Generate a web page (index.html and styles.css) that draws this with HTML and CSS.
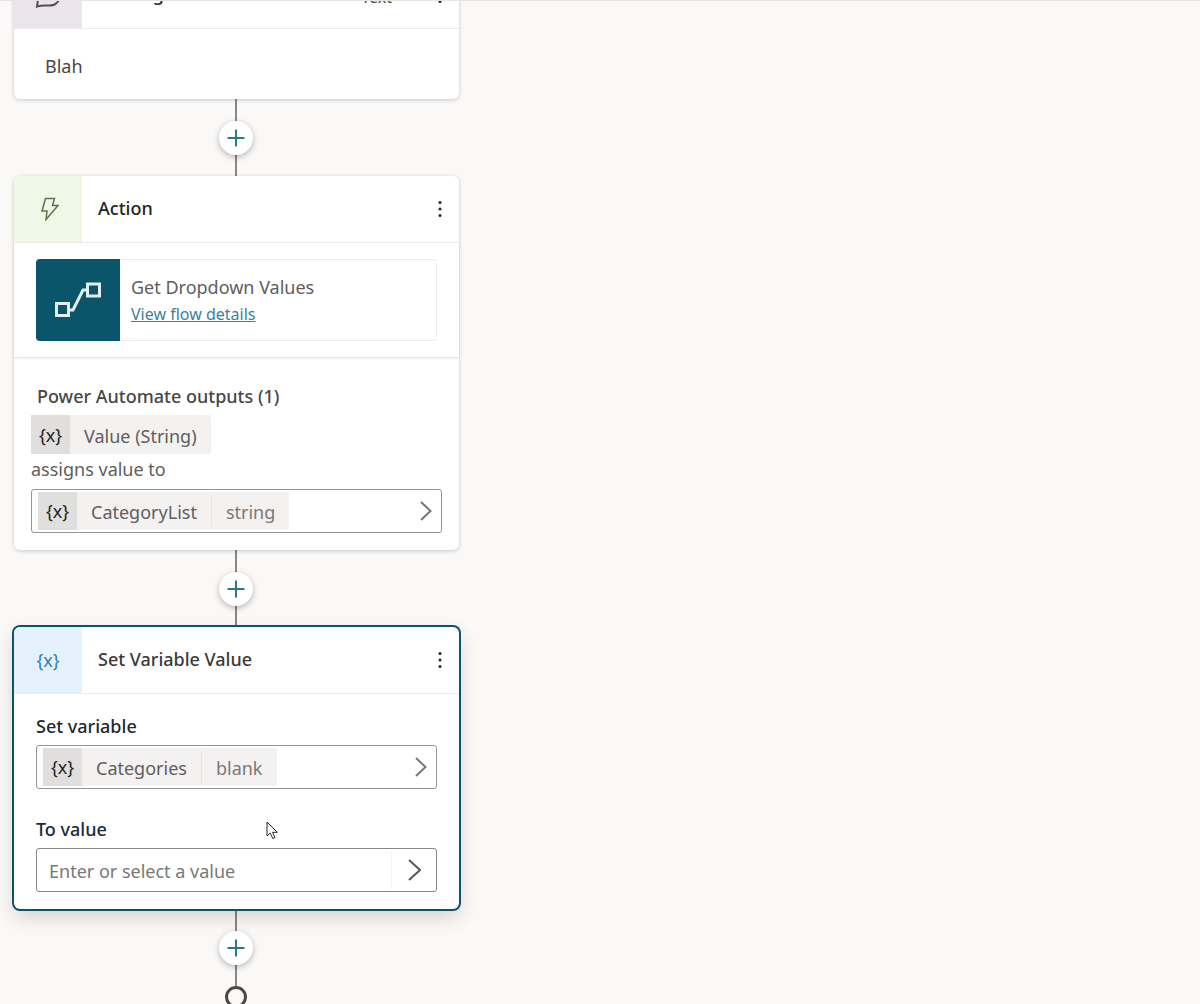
FILE: index.html
```html
<!DOCTYPE html>
<html lang="en">
<head>
<meta charset="utf-8">
<meta name="viewport" content="width=device-width, initial-scale=1">
<title>Authoring canvas</title>
<link rel="stylesheet" href="styles.css">
</head>
<body>
<main class="canvas">
  <div class="flow">

    <section class="card">
      <header class="card-header">
        <span class="card-icon card-icon-message">
          <svg width="26" height="26" viewBox="0 0 26 26" aria-hidden="true"><path d="M3 17A11.500 11.500 0 1 1 21 21.500C17 26 11 21.500 2 24.500z"/></svg>
        </span>
        <h2 class="card-title">Message</h2>
        <span class="card-kind">Text</span>
        <button class="more" type="button" aria-label="More options">
          <svg width="4" height="18" viewBox="0 0 4 18" aria-hidden="true"><circle cx="2" cy="2.500" r="1.500"/><circle cx="2" cy="9" r="1.500"/><circle cx="2" cy="15.500" r="1.500"/></svg>
        </button>
      </header>
      <p class="message-text">Blah</p>
    </section>

    <div class="connector">
      <button class="add" type="button" aria-label="Add node">
        <svg width="18" height="18" viewBox="0 0 18 18" aria-hidden="true"><path d="M9 0.500V17.500M0.500 9H17.500"/></svg>
      </button>
    </div>

    <section class="card">
      <header class="card-header">
        <span class="card-icon card-icon-action">
          <svg width="18" height="24" viewBox="0 0 18 24" aria-hidden="true"><path d="M4.500 1.500H13.500L11.500 8.500H17L5 22.500L6 14H1z"/></svg>
        </span>
        <h2 class="card-title">Action</h2>
        <button class="more" type="button" aria-label="More options">
          <svg width="4" height="18" viewBox="0 0 4 18" aria-hidden="true"><circle cx="2" cy="2.500" r="1.500"/><circle cx="2" cy="9" r="1.500"/><circle cx="2" cy="15.500" r="1.500"/></svg>
        </button>
      </header>
      <div class="flow-section">
        <div class="flow-box">
          <span class="flow-logo">
            <svg width="46" height="36" viewBox="0 0 46 36" aria-hidden="true"><path d="M1.500 21.500H13.500V33.500H1.500zM32.500 2H44.500V14H32.500zM14 28H18L28 8H32"/></svg>
          </span>
          <div class="flow-info">
            <span class="flow-name">Get Dropdown Values</span>
            <a class="flow-link" href="#details">View flow details</a>
          </div>
        </div>
      </div>
      <div class="outputs">
        <h3 class="outputs-title">Power Automate outputs (1)</h3>
        <div class="chip chip-output"><span class="chip-icon">{x}</span><span class="chip-text">Value (String)</span></div>
        <p class="assigns">assigns value to</p>
        <button class="field" type="button">
          <span class="chip"><span class="chip-icon">{x}</span><span class="chip-text">CategoryList</span><span class="chip-type">string</span></span>
          <svg class="chevron" width="12" height="20" viewBox="0 0 12 20" aria-hidden="true"><path d="M1 1L10.500 10L1 19"/></svg>
        </button>
      </div>
    </section>

    <div class="connector">
      <button class="add" type="button" aria-label="Add node">
        <svg width="18" height="18" viewBox="0 0 18 18" aria-hidden="true"><path d="M9 0.500V17.500M0.500 9H17.500"/></svg>
      </button>
    </div>

    <section class="card card-selected">
      <header class="card-header">
        <span class="card-icon card-icon-variable">{x}</span>
        <h2 class="card-title card-title-soft">Set Variable Value</h2>
        <button class="more" type="button" aria-label="More options">
          <svg width="4" height="18" viewBox="0 0 4 18" aria-hidden="true"><circle cx="2" cy="2.500" r="1.500"/><circle cx="2" cy="9" r="1.500"/><circle cx="2" cy="15.500" r="1.500"/></svg>
        </button>
      </header>
      <div class="form">
        <div class="form-row">
          <label class="form-label" for="variable">Set variable</label>
          <button class="field" id="variable" type="button">
            <span class="chip"><span class="chip-icon">{x}</span><span class="chip-text">Categories</span><span class="chip-type">blank</span></span>
            <svg class="chevron" width="12" height="20" viewBox="0 0 12 20" aria-hidden="true"><path d="M1 1L10.500 10L1 19"/></svg>
          </button>
        </div>
        <div class="form-row">
          <label class="form-label" for="value">To value</label>
          <div class="value-box">
            <input class="value-input" id="value" type="text" placeholder="Enter or select a value">
            <button class="value-pick" type="button" aria-label="Select a value">
              <svg class="chevron chevron-dark" width="13" height="22" viewBox="0 0 13 22" aria-hidden="true"><path d="M1 1L12 11L1 21"/></svg>
            </button>
          </div>
        </div>
      </div>
      <svg class="pointer" width="13" height="19" viewBox="0 0 13 19" aria-hidden="true"><path d="M1 1V15L4.200 12L6.800 17.500L9 16.500L6.600 11.300H11.300z"/></svg>
    </section>

    <div class="connector">
      <button class="add" type="button" aria-label="Add node">
        <svg width="18" height="18" viewBox="0 0 18 18" aria-hidden="true"><path d="M9 0.500V17.500M0.500 9H17.500"/></svg>
      </button>
    </div>
    <div class="end-node"></div>

  </div>
</main>
</body>
</html>
```

FILE: styles.css
```css
* {
  box-sizing: border-box;
}

body {
  margin: 0;
  background: #faf9f8;
  color: #484644;
  font-family: "Noto Sans", "Open Sans", sans-serif;
  font-size: 18px;
  line-height: 30px;
}

h2, h3, p {
  margin: 0;
}

button, input {
  font: inherit;
  color: inherit;
  border: 0;
  padding: 0;
  background: none;
}

svg {
  display: block;
  fill: none;
}

.canvas {
  height: 100vh;
  overflow: hidden;
  border-top: 1px solid #e6e5e4;
  padding: 0 14px;
}

/* The column is scrolled past the start of its first card. */
.flow {
  display: flex;
  flex-direction: column;
  max-width: 445px;
  margin-top: -39px;
}

.card {
  position: relative;
  background: #fff;
  border-radius: 6px;
  box-shadow: 0 1px 4px rgba(0, 0, 0, 0.2);
}

.card-selected {
  box-shadow: 0 0 0 2px #0b556a, 0 8px 20px rgba(0, 0, 0, 0.16);
}

.card-header {
  display: flex;
  align-items: center;
  height: 67px;
  padding-right: 12px;
  border-bottom: 1px solid #edebe9;
}

.card-icon {
  display: flex;
  align-items: center;
  justify-content: center;
  align-self: stretch;
  width: 68px;
  padding-left: 4px;
  border-top-left-radius: 6px;
}

.card-icon-message {
  background: #ece6ec;
  padding-left: 0;
  stroke: #5c4a5c;
  stroke-width: 2;
}

.card-icon-action {
  background: #eff7e6;
  stroke: #63704a;
  stroke-width: 1.5;
}

.card-icon-variable {
  background: #e5f2fd;
  color: #2f7fb8;
  padding: 0;
}

.card-title {
  flex: 1;
  padding: 0 16px 2px;
  font-size: 18px;
  font-weight: 500;
  color: #252423;
}

.card-title-soft {
  color: #3b3a39;
}

.card-kind {
  padding: 4px 41px 0 0;
  font-size: 16px;
}

.more {
  display: flex;
  justify-content: center;
  width: 14px;
}

.more svg {
  fill: #252423;
}

.message-text {
  height: 70px;
  padding: 22px 31px;
}

.connector {
  display: flex;
  align-items: center;
  justify-content: center;
  height: 77px;
  padding-right: 1px;
  background: linear-gradient(#8a8886, #8a8886) center / 2px 100% no-repeat content-box;
}

.add {
  display: flex;
  align-items: center;
  justify-content: center;
  width: 34px;
  height: 34px;
  border-radius: 50%;
  background: #fff;
  box-shadow: 0 2px 6px rgba(0, 0, 0, 0.28);
  stroke: #2b7a8c;
  stroke-width: 2;
}

.end-node {
  align-self: center;
  width: 22px;
  height: 22px;
  margin-right: 1px;
  border: 3px solid #4a4846;
  border-radius: 50%;
}

.flow-section {
  padding: 16px 22px;
  border-bottom: 1px solid #e6e4e2;
  box-shadow: 0 1px 2px rgba(0, 0, 0, 0.06);
}

.flow-box {
  display: flex;
  height: 82px;
  border: 1px solid #edebe9;
  border-radius: 4px;
}

.flow-logo {
  display: flex;
  align-items: center;
  justify-content: center;
  width: 84px;
  margin: -1px 0 -1px -1px;
  border-radius: 4px 0 0 4px;
  background: #0b556a;
  stroke: #e3eef1;
  stroke-width: 3;
}

.flow-info {
  display: flex;
  flex-direction: column;
  padding: 13px 11px;
}

.flow-name {
  line-height: 28px;
  color: #605e5c;
}

.flow-link {
  font-size: 16px;
  line-height: 26px;
  color: #3a8299;
}

.outputs {
  padding: 23px 17px 17px;
}

.outputs-title {
  padding-left: 6px;
  margin-bottom: 4px;
  font-size: 18px;
  font-weight: 500;
}

.assigns {
  margin-bottom: 5px;
  color: #605e5c;
}

.chip {
  display: inline-flex;
  align-items: center;
  height: 38px;
  background: #f3f2f1;
  border-radius: 2px;
  color: #605e5c;
}

.chip-output {
  display: flex;
  width: fit-content;
  height: 39px;
}

.chip-icon {
  display: flex;
  align-items: center;
  justify-content: center;
  align-self: stretch;
  width: 39px;
  background: #e1dfdd;
  color: #252423;
}

.chip-text,
.chip-type {
  padding: 2px 14px 0;
}

.chip-type {
  border-left: 1px solid #e6e4e2;
  color: #7a7876;
}

.field {
  display: flex;
  align-items: center;
  justify-content: space-between;
  width: 100%;
  height: 44px;
  padding: 0 9px 0 6px;
  border: 1px solid #979593;
  border-radius: 3px;
}

.chevron {
  stroke: #797775;
  stroke-width: 2;
}

.chevron-dark {
  stroke: #5a5856;
}

.form {
  display: flex;
  flex-direction: column;
  gap: 25px;
  padding: 17px 22px;
}

.form-row {
  display: flex;
  flex-direction: column;
  gap: 4px;
}

.form-label {
  font-weight: 500;
  color: #1b2a36;
}

.value-box {
  display: flex;
  height: 44px;
  border: 1px solid #8a8886;
  border-radius: 3px;
}

.value-input {
  flex: 1;
  min-width: 0;
  padding: 2px 12px 0;
  outline: 0;
}

.value-input::placeholder {
  color: #7a7876;
  opacity: 1;
}

.value-pick {
  display: flex;
  align-items: center;
  justify-content: center;
  width: 45px;
  margin: 2px 0;
  border-left: 1px solid #f3f2f1;
}

/* Mouse pointer resting over the selected card. */
.pointer {
  position: absolute;
  left: 252px;
  top: 194px;
  fill: #fff;
  stroke: #252423;
  stroke-width: 1;
}
```
